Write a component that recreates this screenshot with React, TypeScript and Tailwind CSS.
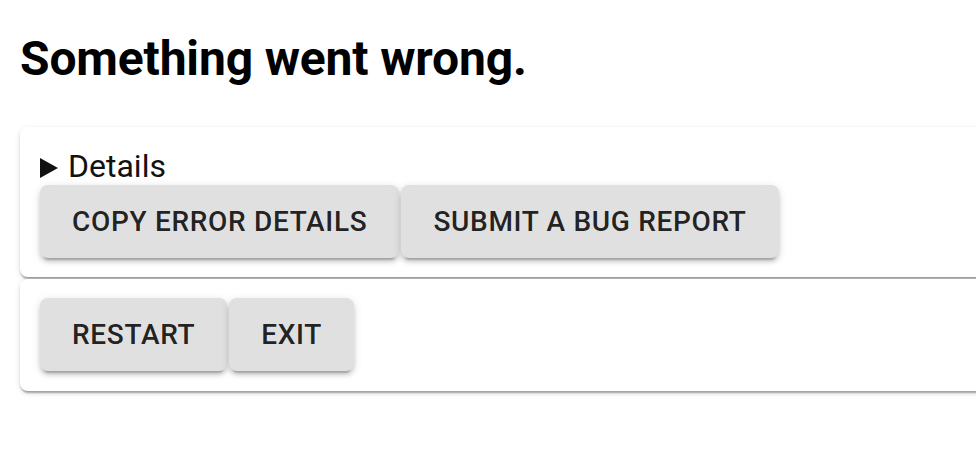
import React from "react";

const btn =
  "h-[73px] px-8 rounded-[8px] bg-[#e0e0e0] text-[28px] font-medium uppercase tracking-[0.68px] text-[rgba(0,0,0,0.87)] leading-[49px] shadow-[0_6px_2px_-4px_rgba(0,0,0,0.2),0_4px_4px_0_rgba(0,0,0,0.14),0_2px_10px_0_rgba(0,0,0,0.12)]";

const paper =
  "w-[1000px] bg-white rounded-[8px] shadow-[0_4px_2px_-2px_rgba(0,0,0,0.2),0_2px_2px_0_rgba(0,0,0,0.14),0_2px_6px_0_rgba(0,0,0,0.12)]";

export default function App() {
  return (
    <div className="w-full min-h-[472px] overflow-hidden bg-white font-['Roboto',sans-serif] text-black">
      <div className="pl-5">
        <h1 className="mt-[31px] mb-[40px] text-[48px] leading-[56px] font-bold tracking-[-0.15px]">
          Something went wrong.
        </h1>
        <div className={paper + " px-5 pt-5 pb-[19px]"}>
          <div className="flex items-center h-[38px] text-[32px] leading-[38px] text-[#111]">
            <svg width="18" height="20" viewBox="0 0 18 20" className="mr-[10px] mt-[3px]">
              <polygon points="0,0 18,10 0,20" fill="#111" />
            </svg>
            <span>Details</span>
          </div>
          <div className="flex gap-[2px]">
            <button className={btn}>Copy error details</button>
            <button className={btn}>Submit a bug report</button>
          </div>
        </div>
        <div className={paper + " mt-[2px] px-5 pt-[19px] pb-5"}>
          <div className="flex gap-[2px]">
            <button className={btn}>Restart</button>
            <button className={btn}>Exit</button>
          </div>
        </div>
      </div>
    </div>
  );
}
